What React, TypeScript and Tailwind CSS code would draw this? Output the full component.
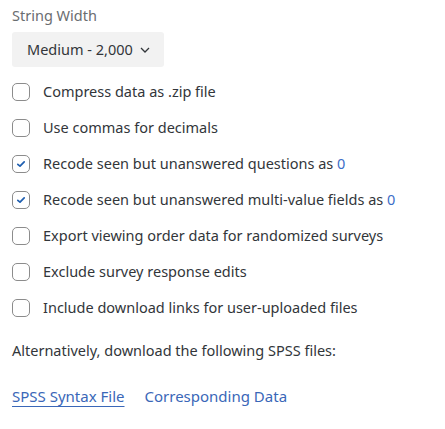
import React from "react";

const Check = ({ checked }: { checked?: boolean }) => (
  <span className="flex h-[18px] w-[18px] shrink-0 items-center justify-center rounded-[5px] border border-[#8c8c8c] bg-white">
    {checked && (
      <svg width="10" height="8" viewBox="0 0 10 8" fill="none">
        <path d="M1.8 4.3 L4 6.2 L8.2 1.8" stroke="#1f5fb0" strokeWidth="1.7" strokeLinecap="round" strokeLinejoin="round" />
      </svg>
    )}
  </span>
);

const Row = ({ checked, children }: { checked?: boolean; children: React.ReactNode }) => (
  <div className="flex h-[36px] items-center gap-[13px] pl-[12px]">
    <Check checked={checked} />
    <span>{children}</span>
  </div>
);

export default function App() {
  return (
    <div className="w-[445px] h-[429px] bg-white text-[14.5px] text-[#32363a]" style={{ fontFamily: '"Noto Sans", "Open Sans", sans-serif' }}>
      <div className="pt-[3px] pl-[12px] text-[#6a6d70] leading-[24px]">String Width</div>
      <div className="pl-[12px] pt-[5px]">
        <button className="flex h-[35px] w-[152px] items-center gap-[7px] rounded-[3px] bg-[#f2f2f2] pl-[15px] pt-[1px] text-[#32363a]">
          <span>Medium - 2,000</span>
          <svg width="10" height="6" viewBox="0 0 10 6" fill="none">
            <path d="M1 1 L5 5 L9 1" stroke="#32363a" strokeWidth="1.3" />
          </svg>
        </button>
      </div>
      <div className="pt-[7px]">
        <Row>Compress data as .zip file</Row>
        <Row>Use commas for decimals</Row>
        <Row checked>
          Recode seen but unanswered questions as <span className="text-[#3b6dc7]">0</span>
        </Row>
        <Row checked>
          Recode seen but unanswered multi-value fields as <span className="text-[#3b6dc7]">0</span>
        </Row>
        <Row>Export viewing order data for randomized surveys</Row>
        <Row>Exclude survey response edits</Row>
        <Row>Include download links for user-uploaded files</Row>
      </div>
      <div className="pl-[12px] pt-[12px] leading-[24px]">Alternatively, download the following SPSS files:</div>
      <div className="flex gap-[20px] pl-[12px] pt-[22px] text-[15px] text-[#3a67b8] leading-[24px]">
        <span className="underline underline-offset-[4px]">SPSS Syntax File</span>
        <span>Corresponding Data</span>
      </div>
    </div>
  );
}
